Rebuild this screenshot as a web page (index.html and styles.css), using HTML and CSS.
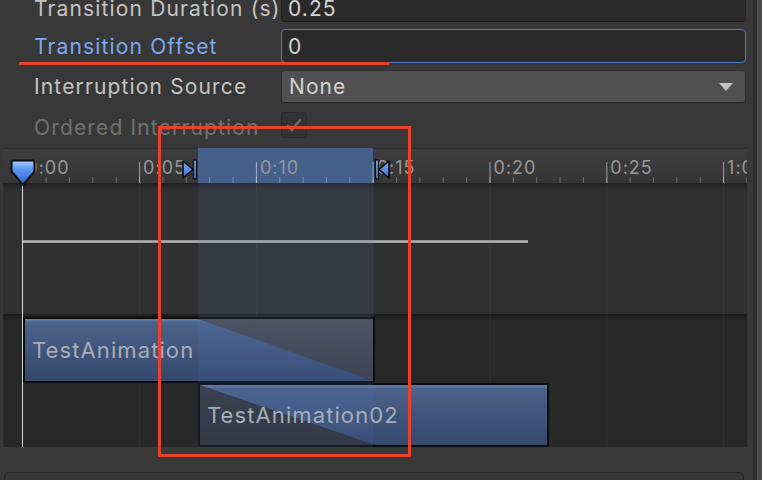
FILE: index.html
```html
<!DOCTYPE html>
<html>
<head>
<meta charset="utf-8">
<link rel="stylesheet" href="styles.css">
</head>
<body>
<div class="page">
  <div class="main">
    <div class="props">
      <div class="row row-first">
        <div class="label">Transition Duration (s)</div>
        <div class="field field-short">0.25</div>
      </div>
      <div class="row row-offset">
        <div class="label label-active">Transition Offset</div>
        <div class="field field-focus">0</div>
      </div>
      <div class="row row-source">
        <div class="label">Interruption Source</div>
        <div class="dropdown">
          <span>None</span>
          <svg class="arrow" width="14" height="8" viewBox="0 0 14 8"><polygon points="0,0 14,0 7,8" fill="#c2c2c2"/></svg>
        </div>
      </div>
      <div class="row row-check">
        <div class="label label-disabled">Ordered Interruption</div>
        <div class="checkbox">
          <svg width="24" height="24" viewBox="0 0 24 24"><polyline points="6,13 10,17 18,7" fill="none" stroke="#6c6c6c" stroke-width="2.6" stroke-linecap="round" stroke-linejoin="round"/></svg>
        </div>
      </div>
    </div>

    <div class="timeline">
      <div class="ruler">
        <div class="ruler-sel"></div>
        <div class="ruler-labels">
          <span class="rl">0:00</span>
          <span class="rl">0:05</span>
          <span class="rl">0:10</span>
          <span class="rl">0:15</span>
          <span class="rl">0:20</span>
          <span class="rl">0:25</span>
          <span class="rl">1:00</span>
        </div>
      </div>
      <div class="track-upper">
        <div class="curve"></div>
      </div>
      <div class="track-lower">
        <div class="clip clip-a"><span class="clip-name">TestAnimation</span></div>
        <div class="clip clip-b"><span class="clip-name">TestAnimation02</span></div>
      </div>
      <div class="trans-overlay"></div>
      <div class="playhead-line"></div>
      <svg class="playhead" width="26" height="30" viewBox="0 0 26 30">
        <defs>
          <linearGradient id="phg" x1="0" y1="0" x2="0" y2="1">
            <stop offset="0" stop-color="#a9ccff"/>
            <stop offset="0.35" stop-color="#5f97f2"/>
            <stop offset="1" stop-color="#2c60cc"/>
          </linearGradient>
        </defs>
        <path d="M3.5,2.5 H22.5 Q24.5,2.5 24.5,4.5 V13.5 L13,27 L1.5,13.5 V4.5 Q1.5,2.5 3.5,2.5 Z" fill="url(#phg)" stroke="#0b0b0b" stroke-width="2"/>
      </svg>
      <svg class="tmark tmark-start" width="17" height="23" viewBox="0 0 17 23">
        <defs>
          <linearGradient id="tmg" x1="0" y1="0" x2="0" y2="1">
            <stop offset="0" stop-color="#7eacf5"/>
            <stop offset="1" stop-color="#3a6fd6"/>
          </linearGradient>
        </defs>
        <path d="M2,3 L12,11.5 L2,20 Z" fill="url(#tmg)" stroke="#0b0b0b" stroke-width="1.6" stroke-linejoin="round"/>
        <rect x="12.5" y="2" width="3" height="19" fill="url(#tmg)" stroke="#0b0b0b" stroke-width="1.2"/>
      </svg>
      <svg class="tmark tmark-end" width="17" height="23" viewBox="0 0 17 23">
        <path d="M15,3 L5,11.5 L15,20 Z" fill="url(#tmg)" stroke="#0b0b0b" stroke-width="1.6" stroke-linejoin="round"/>
        <rect x="1.5" y="2" width="3" height="19" fill="url(#tmg)" stroke="#0b0b0b" stroke-width="1.2"/>
      </svg>
    </div>

    <div class="bottom-box"></div>
  </div>
  <div class="scroll"></div>

  <div class="annot-line"></div>
  <div class="annot-box"></div>
</div>
</body>
</html>
```

FILE: styles.css
```css
html, body {
  margin: 0;
  padding: 0;
  background: #383838;
  font-family: Inter, "Noto Sans", "Liberation Sans", sans-serif;
  overflow: hidden;
}

.page {
  position: relative;
  display: flex;
  width: 762px;
  height: 480px;
  overflow: hidden;
}

.main {
  flex: 1;
  padding-right: 7px;
  min-width: 0;
}

.scroll {
  width: 5px;
  border-left: 4px solid #2f2f2f;
  background: #4a4a4a;
}

/* ---------- property rows ---------- */
.props {
  padding-left: 34px;
}

.row {
  display: grid;
  grid-template-columns: 247px 1fr;
  height: 34px;
  align-items: center;
}

.row-first { margin-top: -9px; }
.row-offset { margin-top: 4px; }
.row-source { margin-top: 6px; }
.row-check { margin-top: 7px; }

.label {
  font-size: 21px;
  letter-spacing: 1.15px;
  color: #c4c4c4;
  white-space: nowrap;
  overflow: hidden;
}

.label-active { color: #7ba8ee; }
.label-disabled { color: #717171; }

.field {
  box-sizing: border-box;
  height: 34px;
  background: #2a2a2a;
  border: 1px solid #232323;
  border-bottom-color: #1e1e1e;
  border-radius: 4px;
  padding-left: 6px;
  font-size: 21px;
  letter-spacing: 1.1px;
  color: #d2d2d2;
  display: flex;
  align-items: center;
}

.field-short {
  height: 31px;
  align-self: start;
  padding-top: 4px;
}

.field-focus {
  border-color: #4b7bc0;
}

.dropdown {
  box-sizing: border-box;
  height: 33px;
  margin-top: 1px;
  background: #515151;
  border: 1px solid #303030;
  border-bottom-color: #262626;
  border-radius: 4px;
  padding: 0 12px 0 7px;
  font-size: 21px;
  letter-spacing: 1.1px;
  color: #d0d0d0;
  display: flex;
  align-items: center;
  justify-content: space-between;
}

.arrow { display: block; }

.checkbox {
  box-sizing: border-box;
  width: 26px;
  height: 26px;
  align-self: start;
  margin-top: 2px;
  background: #333333;
  border: 1px solid #2b2b2b;
  border-radius: 3px;
}

.checkbox svg { display: block; }

/* ---------- timeline ---------- */
.timeline {
  position: relative;
  margin: 4px 0 0 3px;
  width: 744px;
  height: 299px;
  overflow: hidden;
  background: #282828;
}

.ruler {
  position: relative;
  box-sizing: border-box;
  height: 35px;
  border-top: 1px solid #2f2f2f;
  background: linear-gradient(#3d3d3d, #363636);
}

.ruler::after {
  content: "";
  position: absolute;
  left: 0;
  right: 0;
  top: 0;
  bottom: 0;
  background-image:
    linear-gradient(to right, rgba(255,255,255,0.5) 1px, transparent 1px),
    linear-gradient(to right, rgba(255,255,255,0.28) 1px, transparent 1px);
  background-size: 116.8px 21px, 23.36px 6px;
  background-position: 19.3px 100%, 19.3px 100%;
  background-repeat: repeat-x;
  pointer-events: none;
}

.ruler-sel {
  position: absolute;
  left: 195px;
  width: 175px;
  top: -1px;
  bottom: 0;
  background: #46608c;
}

.ruler-labels {
  position: relative;
  display: flex;
  padding: 8px 0 0 19.3px;
  white-space: nowrap;
}

.rl {
  flex: 0 0 116.8px;
  box-sizing: border-box;
  padding-left: 4px;
  font-size: 18px;
  letter-spacing: 1px;
  line-height: 22px;
  color: #979797;
}

.track-upper {
  height: 131px;
  overflow: hidden;
  background:
    linear-gradient(to right, rgba(255,255,255,0.045) 1px, transparent 1px) 19.3px 0 / 116.8px 100% repeat-x,
    linear-gradient(#1f1f1f, #303030 7px);
}

.curve {
  margin: 57px 0 0 19px;
  width: 506px;
  height: 3px;
  background: linear-gradient(#7f7f7f, #b4b4b4 50%, #8a8a8a);
}

.track-lower {
  height: 133px;
  overflow: hidden;
  background:
    linear-gradient(to right, rgba(255,255,255,0.04) 1px, transparent 1px) 19.3px 0 / 116.8px 100% repeat-x,
    linear-gradient(#1b1b1b, #282828 7px);
}

.clip {
  position: relative;
  box-sizing: border-box;
  border: 2px solid #0c0c0c;
  display: flex;
  align-items: center;
  background: linear-gradient(#5b77a4 0, #5b77a4 2px, #4b628a 3px, #35486d 100%);
  overflow: hidden;
}

.clip-a {
  margin: 3px 0 0 20px;
  width: 352px;
  height: 66px;
  padding-left: 7px;
}

.clip-a::after {
  content: "";
  position: absolute;
  top: 0;
  bottom: 0;
  right: 0;
  width: 175px;
  background: linear-gradient(#4b4f56, #393c42);
  clip-path: polygon(0 0, 100% 0, 100% 100%);
}

.clip-b {
  margin: 0 0 0 195px;
  width: 351px;
  height: 64px;
  padding-left: 7px;
}

.clip-b::before {
  content: "";
  position: absolute;
  top: 0;
  bottom: 0;
  left: 0;
  width: 175px;
  background: linear-gradient(#373a40, #2c2f34);
  clip-path: polygon(0 0, 100% 100%, 0 100%);
}

.clip-name {
  position: relative;
  z-index: 1;
  font-size: 22px;
  letter-spacing: 1.1px;
  color: #a8adb6;
  white-space: nowrap;
}

.trans-overlay {
  position: absolute;
  left: 195px;
  width: 175px;
  top: 35px;
  bottom: 0;
  background: rgba(90, 130, 210, 0.12);
  pointer-events: none;
}

.playhead-line {
  position: absolute;
  left: 19px;
  top: 35px;
  bottom: 0;
  width: 1px;
  background: #d6d6d6;
}

.playhead {
  position: absolute;
  left: 6.5px;
  top: 10px;
}

.tmark {
  position: absolute;
  top: 10px;
}

.tmark-start { left: 178px; }
.tmark-end { left: 371px; }

.bottom-box {
  margin: 25px 0 0 4px;
  width: 740px;
  height: 30px;
  box-sizing: border-box;
  border: 1px solid #242424;
  border-radius: 6px;
  background: #363636;
}

/* ---------- annotations ---------- */
.annot-line {
  position: absolute;
  left: 19px;
  top: 62px;
  width: 370px;
  height: 3px;
  background: #e8412c;
}

.annot-box {
  position: absolute;
  left: 158px;
  top: 126px;
  width: 253px;
  height: 331px;
  box-sizing: border-box;
  border: 3px solid #e8412c;
  pointer-events: none;
}
```
